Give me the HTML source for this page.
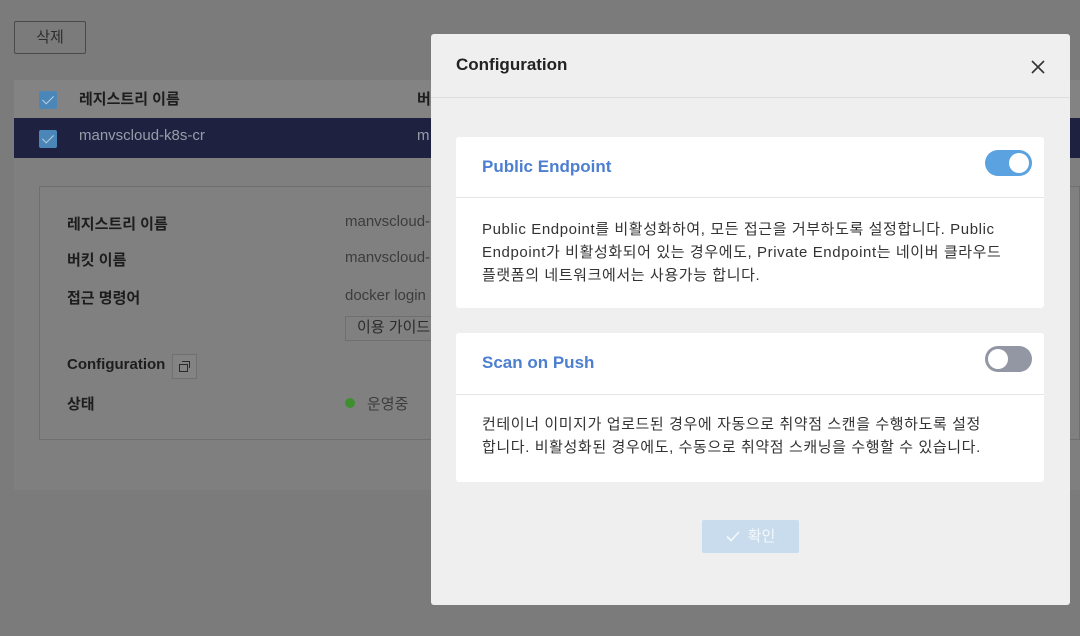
<!DOCTYPE html>
<html><head><meta charset="utf-8"><style>
*{box-sizing:border-box;margin:0;padding:0}
body{width:1080px;height:636px;overflow:hidden;background:#7b7b7b;font-family:"Liberation Sans","Noto Sans CJK KR",sans-serif;position:relative}
.a{position:absolute}
.cb{position:absolute;width:18px;height:18px;background:#4b86b8;border-radius:2px}
.cb:after{content:"";position:absolute;left:6px;top:2px;width:5px;height:10px;border:solid #b8cde0;border-width:0 1.5px 1.5px 0;transform:rotate(45deg)}
.lbl{position:absolute;font-size:15px;font-weight:bold;color:#1d1d1d}
.val{position:absolute;font-size:15px;color:#3c3c3c}
.modal{position:absolute;left:431px;top:34px;width:639px;height:571px;background:#efefef;border-radius:3px}
.card{position:absolute;left:25px;width:588px;background:#fff;border-radius:3px}
.ct{position:absolute;left:26px;font-size:17px;font-weight:bold;color:#4d7fd0}
.cd{position:absolute;left:26px;font-size:15px;color:#333;line-height:23px;white-space:nowrap;letter-spacing:0.6px}
.tg{position:absolute;left:529px;width:47px;height:26px;border-radius:13px}
.tg i{position:absolute;top:3px;width:20px;height:20px;border-radius:50%;background:#fff}
</style></head><body>
<div class="a" style="left:14px;top:21px;width:72px;height:33px;border:1px solid #4a4a4a;border-radius:2px;color:#2e2e2e;font-size:15px;text-align:center;line-height:31px">삭제</div>
<div class="a" style="left:14px;top:80px;width:1066px;height:410px;background:#7f7f7f"></div>
<div class="a" style="left:14px;top:80px;width:1066px;height:38px;background:#838383"></div>
<div class="cb" style="left:39px;top:91px"></div>
<div class="lbl" style="left:79px;top:88px">레지스트리 이름</div>
<div class="lbl" style="left:417px;top:88px">버</div>
<div class="a" style="left:14px;top:118px;width:1066px;height:40px;background:#1e2240"></div>
<div class="cb" style="left:39px;top:130px"></div>
<div class="a" style="left:79px;top:127px;color:#9a9ca8;font-size:15px">manvscloud-k8s-cr</div>
<div class="a" style="left:417px;top:127px;color:#9a9ca8;font-size:15px">m</div>
<div class="a" style="left:39px;top:186px;width:1041px;height:254px;border:1px solid #6f6f6f;background:#808080"></div>
<div class="lbl" style="left:67px;top:213px">레지스트리 이름</div>
<div class="lbl" style="left:67px;top:249px">버킷 이름</div>
<div class="lbl" style="left:67px;top:287px">접근 명령어</div>
<div class="lbl" style="left:67px;top:356px">Configuration</div>
<div class="a" style="left:172px;top:354px;width:25px;height:25px;border:1px solid #707070;background:#838383"></div>
<div class="a" style="left:179px;top:364px;width:9px;height:8px;border:1.5px solid #2a2a2a"></div>
<div class="a" style="left:182px;top:361px;width:8px;height:7px;border-top:1.5px solid #2a2a2a;border-right:1.5px solid #2a2a2a"></div>
<div class="lbl" style="left:67px;top:393px">상태</div>
<div class="val" style="left:345px;top:213px">manvscloud-</div>
<div class="val" style="left:345px;top:249px">manvscloud-</div>
<div class="val" style="left:345px;top:287px">docker login</div>
<div class="a" style="left:345px;top:316px;width:90px;height:25px;border:1px solid #6f6f6f;font-size:15px;color:#2a2a2a;padding-left:11px;line-height:22px">이용 가이드</div>
<div class="a" style="left:345px;top:398px;width:10px;height:10px;border-radius:50%;background:#3f8f2f"></div>
<div class="val" style="left:367px;top:393px">운영중</div>
<div class="modal">
<div class="a" style="left:25px;top:21px;font-size:17px;font-weight:bold;color:#222">Configuration</div>
<svg class="a" style="left:600px;top:26px" width="14" height="14" viewBox="0 0 14 14"><path d="M1 1L13 13M13 1L1 13" stroke="#333" stroke-width="1.6"/></svg>
<div class="a" style="left:0;top:63px;width:639px;height:1px;background:#ddd"></div>
<div class="card" style="top:103px;height:171px">
<div class="ct" style="top:20px">Public Endpoint</div>
<div class="tg" style="top:13px;background:#5aa2e0"><i style="right:3px"></i></div>
<div class="a" style="left:0;top:60px;width:588px;height:1px;background:#e6e6e6"></div>
<div class="cd" style="top:81px">Public Endpoint를 비활성화하여, 모든 접근을 거부하도록 설정합니다. Public<br>Endpoint가 비활성화되어 있는 경우에도, Private Endpoint는 네이버 클라우드<br>플랫폼의 네트워크에서는 사용가능 합니다.</div>
</div>
<div class="card" style="top:299px;height:149px">
<div class="ct" style="top:20px">Scan on Push</div>
<div class="tg" style="top:13px;background:#9396a3"><i style="left:3px"></i></div>
<div class="a" style="left:0;top:61px;width:588px;height:1px;background:#e6e6e6"></div>
<div class="cd" style="top:80px">컨테이너 이미지가 업로드된 경우에 자동으로 취약점 스캔을 수행하도록 설정<br>합니다. 비활성화된 경우에도, 수동으로 취약점 스캐닝을 수행할 수 있습니다.</div>
</div>
<div class="a" style="left:271px;top:486px;width:97px;height:33px;background:#c9dced;border-radius:2px;color:#f4f8fc;font-size:15px;line-height:33px;text-align:center"><svg width="14" height="11" viewBox="0 0 14 11" style="vertical-align:-1px;margin-right:8px"><path d="M1 5.5L5 9.5L13 1" stroke="#f4f8fc" stroke-width="1.6" fill="none"/></svg>확인</div>
</div>
</body></html>
